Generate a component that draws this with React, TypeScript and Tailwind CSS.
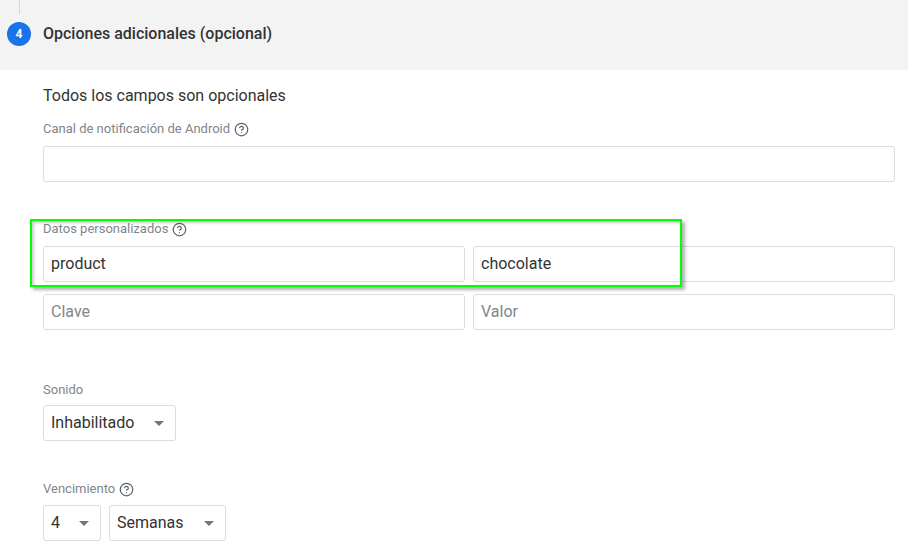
import { CircleHelp } from "lucide-react";

function Label({ text, help }: { text: string; help?: boolean }) {
  return (
    <div className="flex items-center h-4 text-[13px] leading-4 text-[#80868b]">
      <span>{text}</span>
      {help && <CircleHelp size={15} strokeWidth={2} className="ml-[4px] text-[#5f6368]" />}
    </div>
  );
}

function Field({ value, placeholder }: { value?: string; placeholder?: string }) {
  return (
    <div className="flex-1 h-9 flex items-center px-[7px] border border-[#dadce0] rounded-[3px] bg-white text-base">
      {value ? (
        <span className="text-[#333333]">{value}</span>
      ) : (
        <span className="text-[#80868b]">{placeholder}</span>
      )}
    </div>
  );
}

function Select({ value, width }: { value: string; width: string }) {
  return (
    <div className={`${width} h-9 flex items-center justify-between pl-[7px] pr-[11px] border border-[#dadce0] rounded-[3px] bg-white text-base text-[#333333]`}>
      <span>{value}</span>
      <span className="w-0 h-0 border-x-[5px] border-x-transparent border-t-[5px] border-t-[#757575]" />
    </div>
  );
}

export default function App() {
  return (
    <div className="relative w-[908px] h-[555px] overflow-hidden bg-white font-['Roboto',sans-serif]">
      {/* cabecera del paso */}
      <div className="relative h-[70px] bg-[#f3f3f3] flex items-center pl-[7px]">
        <div className="absolute left-[19px] top-0 w-px h-[14px] bg-[#d5d5d5]" />
        <div className="w-6 h-6 -mt-[2px] rounded-full bg-[#1a73e8] text-white text-[12px] font-bold flex items-center justify-center">
          4
        </div>
        <h2 className="ml-3 -mt-[2px] text-base font-medium text-[#333333]">Opciones adicionales (opcional)</h2>
      </div>

      <div className="pl-[43px] pr-[13px]">
        <p className="mt-[16px] text-base leading-[20px] text-[#333333]">Todos los campos son opcionales</p>

        <div className="mt-[15px]">
          <Label text="Canal de notificación de Android" help />
        </div>
        <div className="mt-[9px] flex">
          <Field />
        </div>

        <div className="mt-[39px]">
          <Label text="Datos personalizados" help />
        </div>
        <div className="mt-[9px] flex gap-2">
          <Field value="product" />
          <Field value="chocolate" />
        </div>
        <div className="mt-3 flex gap-2">
          <Field placeholder="Clave" />
          <Field placeholder="Valor" />
        </div>

        <div className="mt-[52px]">
          <Label text="Sonido" />
        </div>
        <div className="mt-[7px] flex">
          <Select value="Inhabilitado" width="w-[133px]" />
        </div>

        <div className="mt-[40px]">
          <Label text="Vencimiento" help />
        </div>
        <div className="mt-2 flex gap-2">
          <Select value="4" width="w-[58px]" />
          <Select value="Semanas" width="w-[117px]" />
        </div>
      </div>

      {/* recuadro verde de resaltado */}
      <div className="absolute left-[30px] top-[219px] w-[652px] h-[68px] border-2 border-[#00ff00] shadow-[3px_3px_3px_rgba(0,0,0,0.3),inset_2px_2px_3px_rgba(0,0,0,0.2)]" />
    </div>
  );
}
